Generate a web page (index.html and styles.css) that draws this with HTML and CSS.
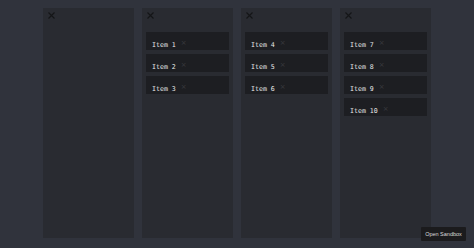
FILE: index.html
```html
<!DOCTYPE html>
<html>
<head>
<meta charset="utf-8">
<link rel="stylesheet" href="styles.css">
</head>
<body>
<div class="board">
  <div class="column">
    <div class="col-head"><svg class="col-x" viewBox="0 0 7 7" width="7" height="7"><path d="M0.5 0.5L6.5 6.5M6.5 0.5L0.5 6.5"/></svg></div>
  </div>
  <div class="column">
    <div class="col-head"><svg class="col-x" viewBox="0 0 7 7" width="7" height="7"><path d="M0.5 0.5L6.5 6.5M6.5 0.5L0.5 6.5"/></svg></div>
    <div class="items">
      <div class="item"><span class="label">Item 1</span><span class="del">×</span></div>
      <div class="item"><span class="label">Item 2</span><span class="del">×</span></div>
      <div class="item"><span class="label">Item 3</span><span class="del">×</span></div>
    </div>
  </div>
  <div class="column">
    <div class="col-head"><svg class="col-x" viewBox="0 0 7 7" width="7" height="7"><path d="M0.5 0.5L6.5 6.5M6.5 0.5L0.5 6.5"/></svg></div>
    <div class="items">
      <div class="item"><span class="label">Item 4</span><span class="del">×</span></div>
      <div class="item"><span class="label">Item 5</span><span class="del">×</span></div>
      <div class="item"><span class="label">Item 6</span><span class="del">×</span></div>
    </div>
  </div>
  <div class="column">
    <div class="col-head"><svg class="col-x" viewBox="0 0 7 7" width="7" height="7"><path d="M0.5 0.5L6.5 6.5M6.5 0.5L0.5 6.5"/></svg></div>
    <div class="items">
      <div class="item"><span class="label">Item 7</span><span class="del">×</span></div>
      <div class="item"><span class="label">Item 8</span><span class="del">×</span></div>
      <div class="item"><span class="label">Item 9</span><span class="del">×</span></div>
      <div class="item"><span class="label">Item 10</span><span class="del">×</span></div>
    </div>
  </div>
</div>
<button class="sandbox">Open Sandbox</button>
</body>
</html>
```
FILE: styles.css
```css
html, body {
  margin: 0;
  padding: 0;
  height: 100%;
}
body {
  background: #30333c;
  font-family: "DejaVu Sans Mono", monospace;
  overflow: hidden;
}
.board {
  display: flex;
  justify-content: center;
  gap: 8px;
  padding-top: 8px;
}
.column {
  width: 91px;
  height: 230px;
  background: #292b31;
  padding: 4px;
  box-sizing: border-box;
}
.col-head {
  height: 20px;
  padding-left: 1px;
}
.col-x {
  display: block;
}
.col-x path {
  stroke: #141517;
  stroke-width: 1.15;
  fill: none;
}
.items {
  display: flex;
  flex-direction: column;
  gap: 4px;
}
.item {
  height: 18px;
  box-sizing: border-box;
  background: #1d1e22;
  padding: 9px 0 0 6px;
  color: #e8e8e8;
  font-size: 6.6px;
  line-height: 8px;
  display: flex;
  align-items: flex-start;
}
.del {
  color: #393a3f;
  font-family: "DejaVu Sans", sans-serif;
  font-size: 7px;
  margin-left: 5px;
  margin-top: -2px;
}
.sandbox {
  position: absolute;
  right: 8px;
  bottom: 7px;
  width: 45px;
  height: 14px;
  padding: 0;
  border: none;
  border-radius: 1px;
  background: #1b1b1d;
  color: #dcdcdc;
  font-family: "Liberation Sans", sans-serif;
  font-size: 5.5px;
}
```
